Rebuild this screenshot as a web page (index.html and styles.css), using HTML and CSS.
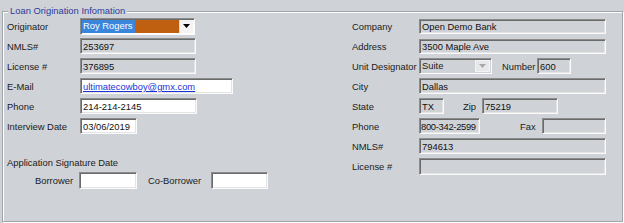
FILE: index.html
```html
<!DOCTYPE html>
<html lang="en">
<head>
    <meta charset="UTF-8">
    <title>Loan Origination Information</title>
    <link rel="stylesheet" href="styles.css">
</head>
<body>
    <fieldset class="group">
        <legend>Loan Origination Infomation</legend>
        <div class="cols">
            <!-- Originator side -->
            <div class="col left">
                <div class="row">
                    <label>Originator</label>
                    <div class="combo combo-active w115">
                        <span class="combo-value"><span class="sel">Roy Rogers</span></span>
                        <span class="combo-btn">
                            <svg width="7" height="4" viewBox="0 0 7 4"><path d="M0 0H7L3.5 4Z" fill="#000"/></svg>
                        </span>
                    </div>
                </div>
                <div class="row">
                    <label>NMLS#</label>
                    <div class="box w116">253697</div>
                </div>
                <div class="row">
                    <label>License #</label>
                    <div class="box w116">376895</div>
                </div>
                <div class="row">
                    <label>E-Mail</label>
                    <div class="box edit w153"><a class="link">ultimatecowboy@gmx.com</a></div>
                </div>
                <div class="row">
                    <label>Phone</label>
                    <div class="box edit w117">214-214-2145</div>
                </div>
                <div class="row">
                    <label>Interview Date</label>
                    <div class="box edit w57">03/06/2019</div>
                </div>

                <div class="sig">
                    <div class="sig-title">Application Signature Date</div>
                    <div class="sig-row">
                        <label class="sig-label">Borrower</label>
                        <div class="box edit tall w58"></div>
                        <label class="sig-label co">Co-Borrower</label>
                        <div class="box edit tall w57"></div>
                    </div>
                </div>
            </div>

            <!-- Company side -->
            <div class="col right">
                <div class="row">
                    <label>Company</label>
                    <div class="box short w187">Open Demo Bank</div>
                </div>
                <div class="row">
                    <label>Address</label>
                    <div class="box short w187">3500 Maple Ave</div>
                </div>
                <div class="row">
                    <label>Unit Designator</label>
                    <div class="combo w73">
                        <span class="combo-value">Suite</span>
                        <span class="combo-btn off">
                            <svg width="7" height="4" viewBox="0 0 7 4"><path d="M0 0H7L3.5 4Z" fill="#a8a8a8"/></svg>
                        </span>
                    </div>
                    <label class="inline lbl-number">Number</label>
                    <div class="box w34">600</div>
                </div>
                <div class="row">
                    <label>City</label>
                    <div class="box w187">Dallas</div>
                </div>
                <div class="row">
                    <label>State</label>
                    <div class="box w25">TX</div>
                    <label class="inline lbl-zip">Zip</label>
                    <div class="box w76">75219</div>
                </div>
                <div class="row">
                    <label>Phone</label>
                    <div class="box tight w61">800-342-2599</div>
                    <label class="inline lbl-fax">Fax</label>
                    <div class="box w64"></div>
                </div>
                <div class="row">
                    <label>NMLS#</label>
                    <div class="box w187">794613</div>
                </div>
                <div class="row row-last">
                    <label>License #</label>
                    <div class="box tall w187"></div>
                </div>
            </div>
        </div>
    </fieldset>
</body>
</html>
```

FILE: styles.css
```css
html, body {
    height: 100%;
}
body {
    margin: 0;
    background-color: #cfd3d7;
    font-family: "Liberation Sans", Arial, sans-serif;
    font-size: 9.4px;
    color: #1a1a1a;
    overflow: hidden;
}
label {
    white-space: nowrap;
}
.group {
    box-sizing: border-box;
    height: calc(100% - 6px);
    margin: 5px 1px 1px 2px;
    padding: 1px 4px 0 4px;
    border: 1px solid #a2a6aa;
    box-shadow: inset 1px 1px 0 #fff, 1px 1px 0 #fff;
}
.group legend {
    padding: 0 2px;
    margin-left: 1px;
    color: #2c3a9c;
    font-size: 9.4px;
    line-height: 12px;
    background-color: #cfd3d7;
}
.cols {
    display: grid;
    grid-template-columns: 345px 1fr;
}
.row {
    display: flex;
    align-items: center;
    height: 16px;
    margin-bottom: 4px;
}
.row-last {
    margin-top: 2px;
}
.left .row label {
    width: 73px;
    flex: none;
}
.right .row label {
    width: 67px;
    flex: none;
}
.right .row .lbl-number { margin-left: 10px; width: 35px; }
.right .row .lbl-zip { margin-left: 19px; width: 19px; }
.right .row .lbl-fax { margin-left: 40px; width: 22px; }

/* sunken text boxes */
.box {
    box-sizing: border-box;
    height: 16px;
    line-height: 13px;
    padding: 1px 1px 0 2px;
    border-top: 1px solid #8c8c8c;
    border-left: 1px solid #8c8c8c;
    border-right: 1px solid #fbfbfb;
    border-bottom: 1px solid #fbfbfb;
    box-shadow: inset 1px 1px 0 #6a6a6a, inset -1px -1px 0 #e4e4e4;
    background-color: #cfd3d7;
    color: #111;
    white-space: nowrap;
    overflow: hidden;
    flex: none;
}
.box.tight {
    padding-left: 1px;
    padding-right: 0;
    letter-spacing: -0.3px;
}
.box.short { height: 15px; line-height: 12px; }
.box.tall { height: 17px; }
.box.edit {
    background-color: #fff;
}
.link {
    color: #1a33d6;
    text-decoration: underline;
}
.w25 { width: 25px; }
.w34 { width: 34px; }
.w57 { width: 57px; }
.w58 { width: 58px; }
.w61 { width: 61px; }
.w64 { width: 64px; }
.w73 { width: 73px; }
.w76 { width: 76px; }
.w115 { width: 115px; }
.w116 { width: 116px; }
.w117 { width: 117px; }
.w153 { width: 153px; }
.w187 { width: 187px; }

/* combo boxes */
.combo {
    box-sizing: border-box;
    display: flex;
    height: 16px;
    padding: 1px;
    border-top: 1px solid #8c8c8c;
    border-left: 1px solid #8c8c8c;
    border-right: 1px solid #fbfbfb;
    border-bottom: 1px solid #fbfbfb;
    box-shadow: inset 1px 1px 0 #6a6a6a;
    flex: none;
}
.combo-active {
    height: 17px;
    background-color: #fff;
}
.combo-value {
    flex: 1;
    line-height: 12px;
    padding-left: 1px;
    white-space: nowrap;
    overflow: hidden;
}
.combo-active .combo-value {
    background-color: #bf5f10;
    padding-left: 0;
}
.sel {
    display: inline-block;
    height: 100%;
    padding: 0 2px 0 1px;
    background-color: #3a86dc;
    color: #fff;
}
.combo-btn {
    width: 13px;
    display: flex;
    align-items: center;
    justify-content: center;
    background-color: #f4f4f4;
    border-left: 1px solid #dcdcdc;
}
.combo-btn.off {
    background-color: #e6e8ea;
    border: 1px solid #f4f4f4;
}

/* signature dates */
.sig {
    margin-top: 23px;
}
.sig-title {
    line-height: 12px;
}
.sig-row {
    display: flex;
    align-items: center;
    margin-top: 3px;
    padding-left: 28px;
}
.sig-label {
    width: 44px;
}
.sig-label.co {
    margin-left: 11px;
    width: 63px;
}
```
